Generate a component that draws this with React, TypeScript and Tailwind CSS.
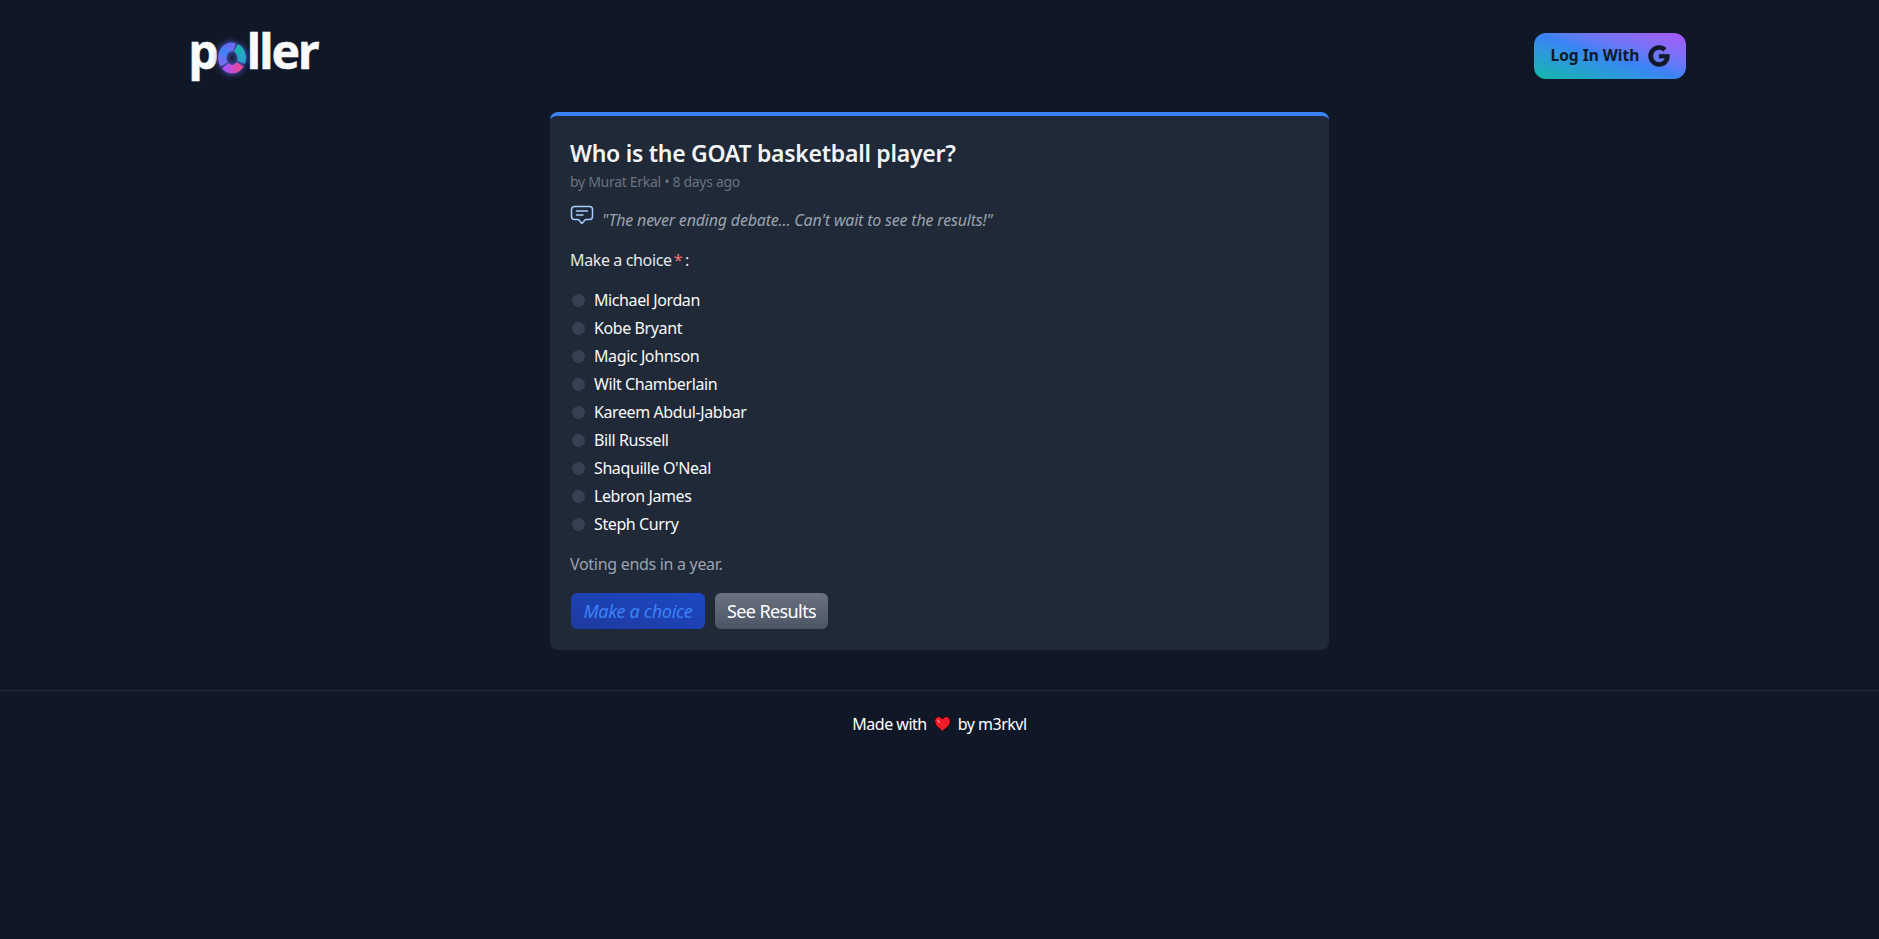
import React from "react";

const options = [
  "Michael Jordan",
  "Kobe Bryant",
  "Magic Johnson",
  "Wilt Chamberlain",
  "Kareem Abdul-Jabbar",
  "Bill Russell",
  "Shaquille O'Neal",
  "Lebron James",
  "Steph Curry",
];

function LogoO() {
  return (
    <svg width="28" height="32" viewBox="0 0 28 32" className="ml-[1px] mr-[1px] mt-[9px] shrink-0 drop-shadow-[0_0_3px_#6366f1]" fill="none" strokeWidth="8.500">
      <defs>
        <linearGradient id="lg1" x1="0.8" y1="0" x2="0.2" y2="1">
          <stop offset="0" stopColor="#6d6af5" />
          <stop offset="0.5" stopColor="#3b82f6" />
          <stop offset="1" stopColor="#7c6cf0" />
        </linearGradient>
        <linearGradient id="lg2" x1="0.2" y1="0" x2="0.8" y2="1">
          <stop offset="0" stopColor="#14b8a6" />
          <stop offset="1" stopColor="#2a9fd0" />
        </linearGradient>
        <linearGradient id="lg3" x1="0" y1="0" x2="1" y2="0">
          <stop offset="0" stopColor="#a855f7" />
          <stop offset="1" stopColor="#ec4899" />
        </linearGradient>
      </defs>
      <path d="M16.500 5.200 A9.500 11 0 0 0 6.200 22.300" stroke="url(#lg1)" />
      <path d="M18 5.800 A9.500 11 0 0 1 23 20.200" stroke="url(#lg2)" />
      <path d="M22 22.300 A9.500 11 0 0 1 7.300 23.800" stroke="url(#lg3)" />
    </svg>
  );
}

function GoogleG() {
  return (
    <svg width="24" height="24" viewBox="0 0 24 24" fill="#111827">
      <path d="M12.200 1.600c2.900 0 5.200 1 7 2.700l-2.900 2.800c-1-1-2.400-1.600-4.100-1.600-3.600 0-6.300 2.900-6.300 6.500s2.700 6.500 6.300 6.500c3.400 0 5.400-2 5.700-4.400h-5.700v-3.700h9.900c.1.600.2 1.200.2 1.900 0 6-4 10.100-10.100 10.100C6.300 22.400 1.600 17.800 1.600 12S6.300 1.600 12.200 1.600z" stroke="#111827" strokeWidth="0.6" />
    </svg>
  );
}

function Heart() {
  return (
    <svg width="17" height="16" viewBox="0 0 17 16">
      <path d="M8.500 15.300 C5 12.500 .6 9.300 .6 5 C.6 2.300 2.600 .6 4.700 .6 C6.300 .6 7.700 1.500 8.500 3.100 C9.300 1.500 10.700 .6 12.300 .6 C14.400 .6 16.400 2.300 16.400 5 C16.400 9.300 12 12.500 8.500 15.300 Z" fill="#ef1c2c" stroke="#12060c" strokeWidth="1" />
      <path d="M3.300 4.200 C4 6 5 7 6 7.500 C5.500 5.500 5 4 4.200 3.200 Z" fill="#f98a90" />
    </svg>
  );
}

function CommentIcon() {
  return (
    <svg width="24" height="22" viewBox="0 0 24 22" fill="none" stroke="#a5cdfd" strokeWidth="1.500" strokeLinecap="round" strokeLinejoin="round">
      <path d="M4.500 1.500 H19.500 A3 3 0 0 1 22.500 4.500 V11.500 A3 3 0 0 1 19.500 14.500 H15.500 L11.800 18.500 L8.500 14.500 H4.500 A3 3 0 0 1 1.500 11.500 V4.500 A3 3 0 0 1 4.500 1.500 Z" />
      <path d="M6.500 6 H17.500 M6.500 10 H13" />
    </svg>
  );
}

export default function App() {
  return (
    <div className="min-h-[939px] bg-[#101827] font-['Noto_Sans','Open_Sans',sans-serif] text-white">
      <header className="mx-auto flex h-[112px] max-w-[1536px] items-start justify-between pl-[17px] pr-[22px] pt-[33px]">
        <div className="flex h-[46px] items-start text-[48px] font-bold leading-[35px] tracking-[-2px] text-[#f9fafb] [-webkit-text-stroke:0.5px_#f9fafb] [stroke-linejoin:round]">
          <span>p</span>
          <LogoO />
          <span>ller</span>
        </div>
        <button className="flex h-[46px] w-[152px] items-center gap-[8px] rounded-xl bg-gradient-to-tr from-[#14b8a6] via-[#3b82f6] to-[#a855f7] pl-[17px] text-[15.500px] font-bold text-[#111827]">
          Log In With
          <GoogleG />
        </button>
      </header>

      <main className="ml-[550px] box-border h-[538px] w-[779px] rounded-lg border-t-4 border-[#3b82f6] bg-[#1f2937] px-5 pt-[21px]">
        <h1 className="text-[23px] font-semibold leading-8 tracking-[-0.270px] text-[#f3f4f6]">Who is the GOAT basketball player?</h1>
        <p className="mt-[3px] text-[14px] leading-5 tracking-[-0.300px] text-[#6b7280]">by Murat Erkal • 8 days ago</p>
        <div className="mt-[13px] flex items-start">
          <CommentIcon />
          <p className="ml-[8px] mt-[3px] text-[16px] italic leading-6 tracking-[-0.190px] text-[#9ca3af]">"The never ending debate... Can't wait to see the results!"</p>
        </div>
        <p className="mt-[16px] text-[16px] leading-6 tracking-[-0.370px] text-[#e5e7eb]">
          Make a choice<span className="ml-[2px] text-[#f87171]">*</span>
          <span className="ml-[3px]">:</span>
        </p>
        <ul className="mt-[14px] flex flex-col">
          {options.map((o) => (
            <li key={o} className="flex h-[28px] items-center text-[16px] tracking-[-0.400px]">
              <span className="ml-[2px] mr-[9px] h-[13px] w-[13px] rounded-full bg-[#374151]" />
              <span className="text-[#f9fafb]">{o}</span>
            </li>
          ))}
        </ul>
        <p className="mt-[14px] text-[16px] leading-6 tracking-[-0.300px] text-[#9ca3af]">Voting ends in a year.</p>
        <div className="ml-[1px] mt-[17px] flex gap-[10px]">
          <button className="h-[36px] w-[134px] rounded-md bg-gradient-to-tr from-[#1e3a9f] to-[#1c48c4] text-[18px] italic tracking-[-0.300px] text-[#3b82f6]">Make a choice</button>
          <button className="h-[36px] w-[113px] rounded-md bg-gradient-to-t from-[#4b5563] to-[#6b7280] text-[18px] tracking-[-0.600px] text-white">See Results</button>
        </div>
      </main>

      <footer className="mt-[40px] flex h-[66px] items-center justify-center border-t border-[#1f2937] text-[16px] tracking-[-0.500px] text-white">
        <span>Made with</span>
        <span className="mx-[7px] flex"><Heart /></span>
        <span>by m3rkvl</span>
      </footer>
    </div>
  );
}
